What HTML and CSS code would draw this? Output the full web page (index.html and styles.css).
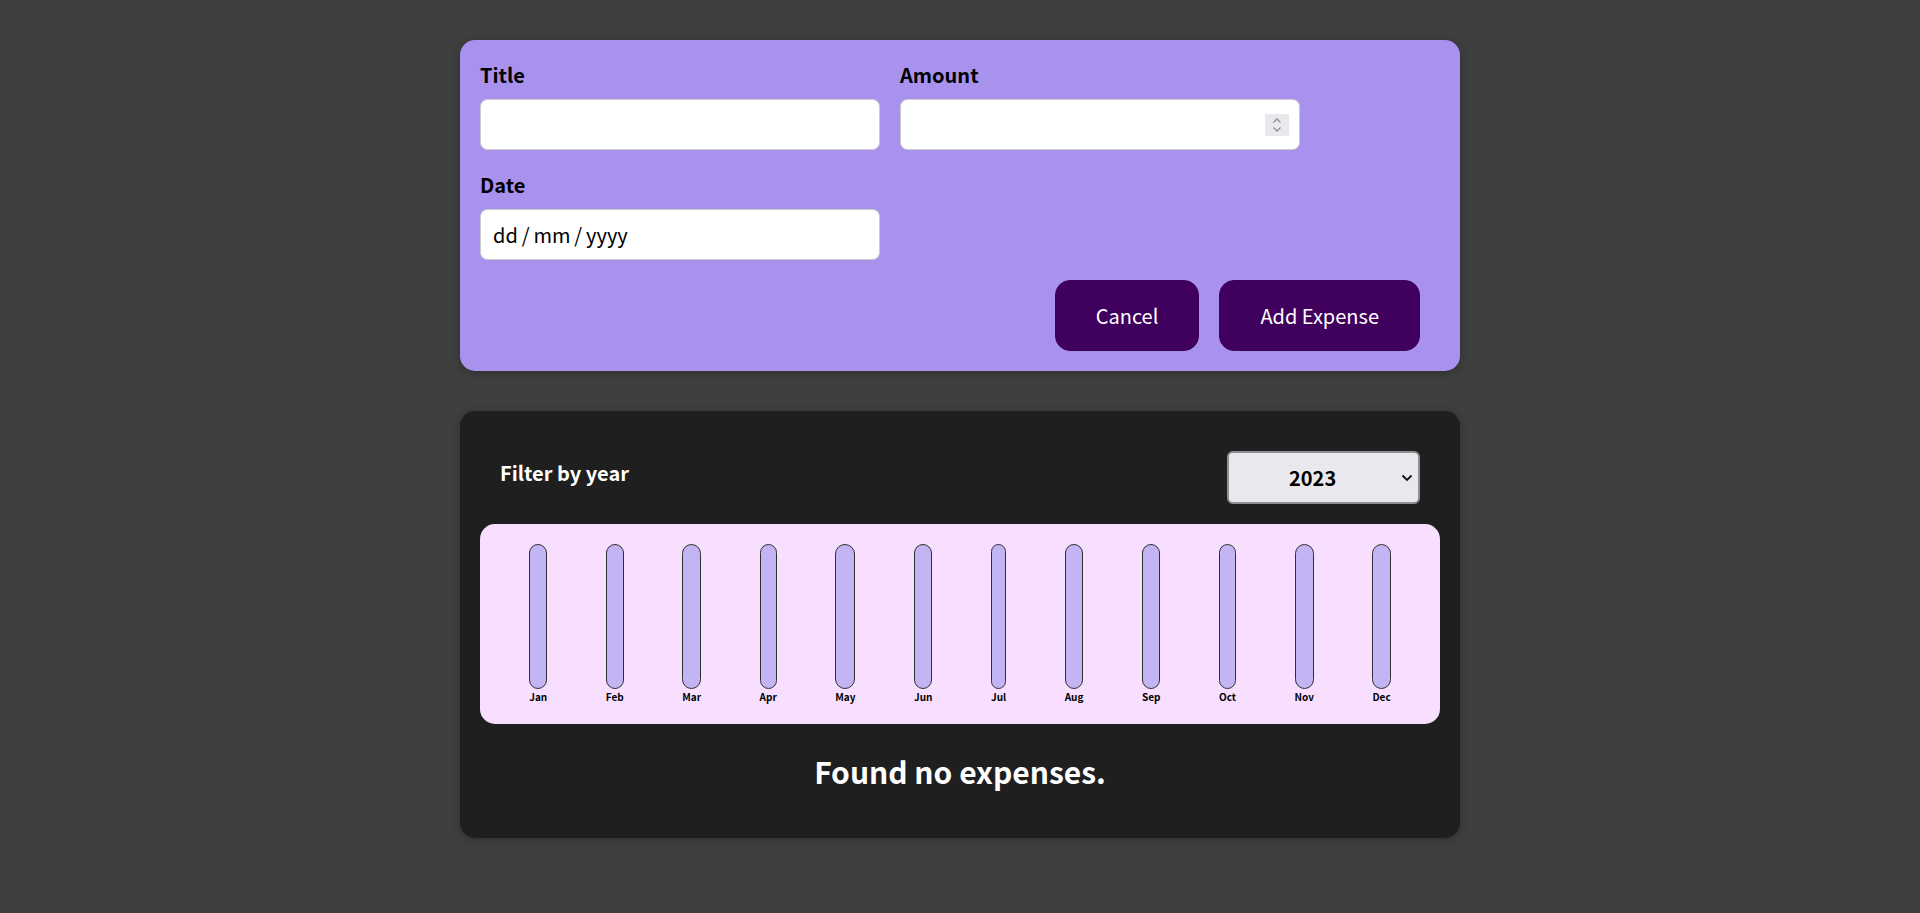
FILE: index.html
```html
<!DOCTYPE html>
<html lang="en">
<head>
<meta charset="utf-8">
<title>Expenses</title>
<link rel="stylesheet" href="styles.css">
</head>
<body>
<main class="app">
  <section class="new-expense">
    <form class="expense-form">
      <div class="controls">
        <div class="control">
          <label for="title">Title</label>
          <input id="title" class="field" type="text">
        </div>
        <div class="control">
          <label for="amount">Amount</label>
          <div class="number-wrap">
            <input id="amount" class="field" type="number" min="0.01" step="0.01">
            <span class="spinner" aria-hidden="true">
              <svg width="24" height="22" viewBox="0 0 24 22">
                <path d="M8.5 8.5 L12 5 L15.5 8.5" fill="none" stroke="#8e8e95" stroke-width="1.3"/>
                <path d="M8.5 13.5 L12 17 L15.5 13.5" fill="none" stroke="#8e8e95" stroke-width="1.3"/>
              </svg>
            </span>
          </div>
        </div>
        <div class="control">
          <label for="date">Date</label>
          <input id="date" class="field field-date" type="text" value="dd / mm / yyyy" readonly>
        </div>
      </div>
      <div class="actions"><button type="button" class="btn">Cancel</button><button type="submit" class="btn">Add Expense</button></div>
    </form>
  </section>

  <section class="expenses">
    <div class="filter">
      <div class="filter-control">
        <label for="year">Filter by year</label>
        <div class="select-wrap">
          <select id="year" class="year-select">
            <option>2023</option>
            <option>2022</option>
            <option>2021</option>
            <option>2020</option>
          </select>
          <svg class="select-arrow" width="12" height="8" viewBox="0 0 12 8" aria-hidden="true">
            <path d="M1.5 1.5 L6 6 L10.5 1.5" fill="none" stroke="#111" stroke-width="1.8"/>
          </svg>
        </div>
      </div>
    </div>

    <div class="chart">
      <div class="chart-bar"><div class="bar-inner"></div><div class="bar-label">Jan</div></div>
      <div class="chart-bar"><div class="bar-inner"></div><div class="bar-label">Feb</div></div>
      <div class="chart-bar"><div class="bar-inner"></div><div class="bar-label">Mar</div></div>
      <div class="chart-bar"><div class="bar-inner"></div><div class="bar-label">Apr</div></div>
      <div class="chart-bar"><div class="bar-inner"></div><div class="bar-label">May</div></div>
      <div class="chart-bar"><div class="bar-inner"></div><div class="bar-label">Jun</div></div>
      <div class="chart-bar"><div class="bar-inner"></div><div class="bar-label">Jul</div></div>
      <div class="chart-bar"><div class="bar-inner"></div><div class="bar-label">Aug</div></div>
      <div class="chart-bar"><div class="bar-inner"></div><div class="bar-label">Sep</div></div>
      <div class="chart-bar"><div class="bar-inner"></div><div class="bar-label">Oct</div></div>
      <div class="chart-bar"><div class="bar-inner"></div><div class="bar-label">Nov</div></div>
      <div class="chart-bar"><div class="bar-inner"></div><div class="bar-label">Dec</div></div>
    </div>

    <h2 class="fallback">Found no expenses.</h2>
  </section>
</main>
</body>
</html>
```

FILE: styles.css
```css
* {
  box-sizing: border-box;
}

html {
  font-family: "Noto Sans CJK JP", "Noto Sans", sans-serif;
  font-size: 20px;
}

body {
  margin: 0;
  background-color: #3f3f3f;
}

.app {
  display: flow-root;
}

/* ---------- new expense card ---------- */
.new-expense {
  background-color: #a892ee;
  padding: 20px;
  margin: 40px auto;
  width: 1000px;
  border-radius: 15px;
  text-align: center;
  box-shadow: 0 1.25px 10px rgba(0, 0, 0, 0.25);
}

.controls {
  display: flex;
  flex-wrap: wrap;
  gap: 20px;
  margin-bottom: 20px;
  text-align: left;
}

.control label {
  display: block;
  font-weight: bold;
  margin-bottom: 10px;
  color: #000;
}

.field {
  display: block;
  font: inherit;
  color: #000;
  padding: 10px;
  border-radius: 7.5px;
  border: 1px solid #ccc;
  background: #fff;
  width: 400px;
  outline: none;
}

.field-date {
  padding-left: 12px;
  word-spacing: -0.6px;
}

.number-wrap {
  position: relative;
  width: 400px;
}

.field[type="number"] {
  -moz-appearance: textfield;
}

.field[type="number"]::-webkit-inner-spin-button,
.field[type="number"]::-webkit-outer-spin-button {
  -webkit-appearance: none;
  margin: 0;
}

.spinner {
  position: absolute;
  right: 11px;
  top: 15px;
  width: 24px;
  height: 22px;
  background: #e9e9ed;
  display: flex;
}

.actions {
  text-align: right;
}

.btn {
  font: inherit;
  cursor: pointer;
  padding: 20px 40px;
  border: 1px solid #40005d;
  background-color: #40005d;
  color: #fff;
  border-radius: 15px;
  margin-right: 20px;
}

/* ---------- expenses card ---------- */
.expenses {
  padding: 20px;
  background-color: #1f1f1f;
  margin: 40px auto;
  width: 1000px;
  border-radius: 15px;
  box-shadow: 0 1.25px 10px rgba(0, 0, 0, 0.25);
}

.filter {
  color: #fff;
  padding: 0 20px;
}

.filter-control {
  display: flex;
  width: 100%;
  align-items: center;
  justify-content: space-between;
  margin: 20px 0;
}

.filter-control label {
  font-weight: bold;
  margin-bottom: 10px;
}

.select-wrap {
  position: relative;
  display: flex;
}

.year-select {
  -webkit-appearance: none;
  appearance: none;
  font: inherit;
  font-weight: bold;
  color: #000;
  width: 193px;
  height: 53px;
  padding: 0 0 0 60px;
  background-color: #e9e9ed;
  border: 2px solid #8f8f96;
  border-radius: 6px;
  outline: none;
}

.select-arrow {
  position: absolute;
  right: 7px;
  top: 23px;
}

.chart {
  padding: 20px;
  border-radius: 15px;
  background-color: #f8dfff;
  text-align: center;
  display: flex;
  justify-content: space-around;
  height: 200px;
}

.chart-bar {
  height: 100%;
  display: flex;
  flex-direction: column;
  align-items: center;
}

.bar-inner {
  flex: 1;
  width: 100%;
  border: 1px solid #313131;
  border-radius: 15px;
  background-color: #c3b4f3;
}

.bar-label {
  font-weight: bold;
  font-size: 10px;
  text-align: center;
  color: #000;
}

.fallback {
  color: #fff;
  text-align: center;
  font-size: 30px;
  font-weight: bold;
  margin: 25px 0;
}
```
